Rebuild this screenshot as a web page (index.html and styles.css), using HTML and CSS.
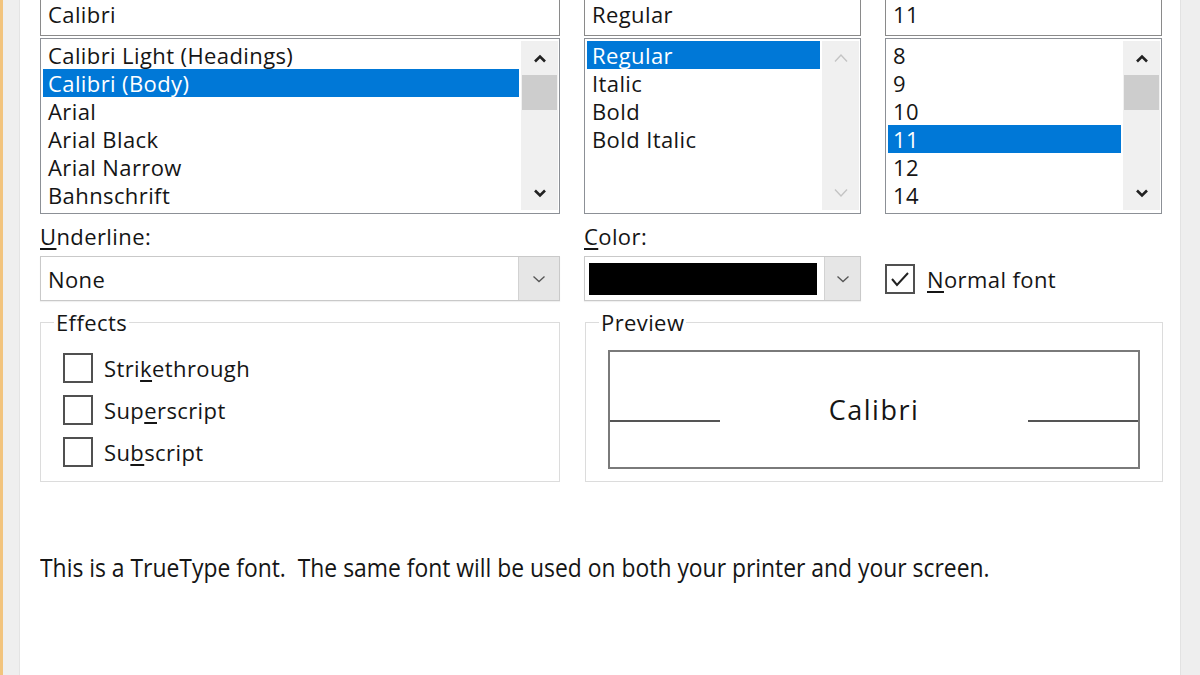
FILE: index.html
```html
<!DOCTYPE html>
<html lang="en">
<head>
    <meta charset="UTF-8">
    <title>Font</title>
    <link rel="stylesheet" href="styles.css">
</head>
<body>
    <div class="window">
        <div class="frame-left"></div>
        <div class="dialog">
            <div class="font-row">
                <div class="col">
                    <div class="textbox">Calibri</div>
                    <div class="listbox">
                        <div class="items">
                            <div class="item">Calibri Light (Headings)</div>
                            <div class="item selected">Calibri (Body)</div>
                            <div class="item">Arial</div>
                            <div class="item">Arial Black</div>
                            <div class="item">Arial Narrow</div>
                            <div class="item">Bahnschrift</div>
                        </div>
                        <div class="scrollbar">
                            <div class="arrow">
                                <svg width="14" height="9" viewBox="0 0 14 9"><polyline points="2,7.5 7,2.5 12,7.5" fill="none" stroke="#222" stroke-width="2.6"/></svg>
                            </div>
                            <div class="thumb"></div>
                            <div class="track"></div>
                            <div class="arrow">
                                <svg width="14" height="9" viewBox="0 0 14 9"><polyline points="2,1.5 7,6.5 12,1.5" fill="none" stroke="#222" stroke-width="2.6"/></svg>
                            </div>
                        </div>
                    </div>
                </div>
                <div class="col">
                    <div class="textbox">Regular</div>
                    <div class="listbox">
                        <div class="items">
                            <div class="item selected">Regular</div>
                            <div class="item">Italic</div>
                            <div class="item">Bold</div>
                            <div class="item">Bold Italic</div>
                        </div>
                        <div class="scrollbar">
                            <div class="arrow">
                                <svg width="16" height="10" viewBox="0 0 16 10"><polyline points="2,8.5 8,2 14,8.5" fill="none" stroke="#c4c4c4" stroke-width="1.4"/></svg>
                            </div>
                            <div class="track"></div>
                            <div class="arrow">
                                <svg width="16" height="10" viewBox="0 0 16 10"><polyline points="2,1.5 8,8 14,1.5" fill="none" stroke="#c4c4c4" stroke-width="1.4"/></svg>
                            </div>
                        </div>
                    </div>
                </div>
                <div class="col">
                    <div class="textbox">11</div>
                    <div class="listbox">
                        <div class="items">
                            <div class="item">8</div>
                            <div class="item">9</div>
                            <div class="item">10</div>
                            <div class="item selected">11</div>
                            <div class="item">12</div>
                            <div class="item">14</div>
                        </div>
                        <div class="scrollbar">
                            <div class="arrow">
                                <svg width="14" height="9" viewBox="0 0 14 9"><polyline points="2,7.5 7,2.5 12,7.5" fill="none" stroke="#222" stroke-width="2.6"/></svg>
                            </div>
                            <div class="thumb"></div>
                            <div class="track"></div>
                            <div class="arrow">
                                <svg width="14" height="9" viewBox="0 0 14 9"><polyline points="2,1.5 7,6.5 12,1.5" fill="none" stroke="#222" stroke-width="2.6"/></svg>
                            </div>
                        </div>
                    </div>
                </div>
            </div>

            <div class="font-row options-row">
                <div class="col">
                    <div class="label"><u>U</u>nderline:</div>
                    <div class="dropdown">
                        <div class="value">None</div>
                        <div class="drop-btn">
                            <svg width="14" height="8" viewBox="0 0 14 8"><polyline points="1.5,1.5 7,6.5 12.5,1.5" fill="none" stroke="#555" stroke-width="1.3"/></svg>
                        </div>
                    </div>
                </div>
                <div class="col">
                    <div class="label"><u>C</u>olor:</div>
                    <div class="dropdown">
                        <div class="value"><div class="swatch"></div></div>
                        <div class="drop-btn">
                            <svg width="14" height="8" viewBox="0 0 14 8"><polyline points="1.5,1.5 7,6.5 12.5,1.5" fill="none" stroke="#555" stroke-width="1.3"/></svg>
                        </div>
                    </div>
                </div>
                <div class="col">
                    <div class="label">&nbsp;</div>
                    <div class="check-line">
                        <span class="checkbox">
                            <svg width="26" height="26" viewBox="0 0 26 26"><polyline points="5,13 10,19 21,7" fill="none" stroke="#222" stroke-width="2"/></svg>
                        </span>
                        <span><u>N</u>ormal font</span>
                    </div>
                </div>
            </div>

            <div class="groups">
                <fieldset class="group effects">
                    <legend>Effects</legend>
                    <div class="check-row"><span class="checkbox"></span><span>Stri<u>k</u>ethrough</span></div>
                    <div class="check-row"><span class="checkbox"></span><span>Sup<u>e</u>rscript</span></div>
                    <div class="check-row"><span class="checkbox"></span><span>Su<u>b</u>script</span></div>
                </fieldset>
                <fieldset class="group preview">
                    <legend>Preview</legend>
                    <div class="preview-box">
                        <div class="base-line"></div>
                        <div class="sample">Calibri</div>
                        <div class="base-line"></div>
                    </div>
                </fieldset>
            </div>

            <p class="note"><span>This is a TrueType font.&nbsp; The same font will be used on both your printer and your screen.</span></p>
        </div>
        <div class="frame-right"></div>
    </div>
</body>
</html>
```

FILE: styles.css
```css
body {
    margin: 0;
    font-family: "Open Sans", "Noto Sans", sans-serif;
    font-size: 22px;
    letter-spacing: 0.4px;
    color: #151515;
    background: #fff;
}
u {
    text-underline-offset: 3px;
}
.window {
    display: flex;
    height: 675px;
    overflow: hidden;
}
.frame-left {
    width: 16px;
    border-left: 3px solid #f2c47e;
    background: #efefef;
    border-right: 1px solid #e4e4e4;
}
.dialog {
    flex: 1;
    padding-left: 20px;
    background: #fff;
}
.frame-right {
    width: 19px;
    background: #eeeeee;
    border-left: 1px solid #e2e2e2;
}

.font-row {
    display: grid;
    grid-template-columns: 520px 277px 277px;
    column-gap: 24px;
}
.textbox {
    height: 36px;
    box-sizing: border-box;
    border: 1px solid #8a8a8a;
    border-top: none;
    padding: 0 7px 8px;
    display: flex;
    align-items: center;
}
.listbox {
    margin-top: 2px;
    height: 176px;
    box-sizing: border-box;
    border: 1px solid #8c9096;
    padding: 2px 1px 3px 2px;
    display: flex;
    overflow: hidden;
}
.items {
    flex: 1;
    overflow: hidden;
}
.item {
    height: 28px;
    line-height: 28px;
    padding-left: 5px;
    white-space: nowrap;
}
.item.selected {
    background: #0078d7;
    color: #fff;
}
.scrollbar {
    width: 37px;
    margin-left: 2px;
    background: #f0f0f0;
    display: flex;
    flex-direction: column;
}
.arrow {
    height: 34px;
    display: flex;
    align-items: center;
    justify-content: center;
}
.thumb {
    height: 35px;
    margin: 0 1px;
    background: #cdcdcd;
}
.track {
    flex: 1;
}

.options-row .label {
    margin-top: 10px;
    height: 24px;
    line-height: 24px;
}
.dropdown {
    margin-top: 8px;
    height: 45px;
    box-sizing: border-box;
    border: 1px solid #c9c9c9;
    display: flex;
    box-shadow: 0 1px 1px rgba(0, 0, 0, 0.06);
}
.dropdown .value {
    flex: 1;
    padding: 0 7px;
    display: flex;
    align-items: center;
}
.dropdown .swatch {
    margin-left: -3px;
    width: 228px;
    height: 32px;
    background: #000;
}
.drop-btn {
    width: 40px;
    background: #e6e6e6;
    border-left: 1px solid #d2d2d2;
    display: flex;
    align-items: center;
    justify-content: center;
}
.check-line {
    margin-top: 8px;
    height: 45px;
    display: flex;
    align-items: center;
    gap: 12px;
}
.checkbox {
    width: 26px;
    height: 26px;
    border: 2px solid #505050;
    background: #fff;
    display: inline-flex;
    flex-shrink: 0;
}

.groups {
    margin-top: 9px;
    display: grid;
    grid-template-columns: 520px 578px;
    column-gap: 25px;
}
.group {
    margin: 0;
    border: 1px solid #dcdcdc;
    padding: 13px 22px 8px;
    min-width: 0;
}
.group legend {
    margin-left: -9px;
    padding: 0 2px;
    height: 24px;
    line-height: 24px;
}
.check-row {
    height: 42px;
    display: flex;
    align-items: center;
    gap: 11px;
}
.preview {
    padding: 16px 22px 11px;
}
.preview-box {
    height: 119px;
    box-sizing: border-box;
    border: 2px solid #7a7a7a;
    display: flex;
    align-items: flex-start;
}
.base-line {
    width: 110px;
    height: 2px;
    margin-top: 68px;
    background: #555;
}
.sample {
    flex: 1;
    text-align: center;
    margin-top: 43px;
    font-size: 27px;
    line-height: 30px;
    letter-spacing: 1.5px;
}

.note {
    margin: 70px 0 0;
    line-height: 30px;
    white-space: nowrap;
}
.note span {
    display: inline-block;
    font-size: 25px;
    letter-spacing: 0;
    transform: scaleX(0.915);
    transform-origin: left center;
}
```
